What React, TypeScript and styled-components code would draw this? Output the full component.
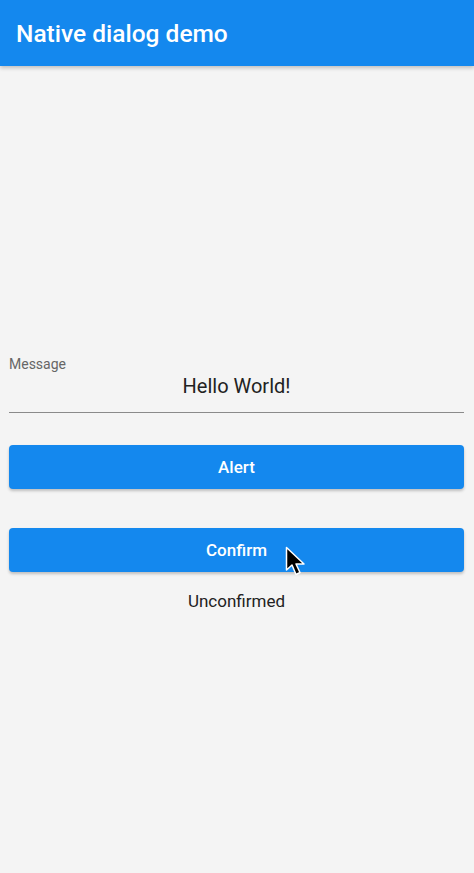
import styled, { createGlobalStyle } from "styled-components";

const GlobalStyle = createGlobalStyle`
  html, body {
    margin: 0;
    padding: 0;
    background: #f4f4f4;
    font-family: Roboto, "Liberation Sans", sans-serif;
  }
`;

const Page = styled.div`
  min-height: 873px;
  background: #f4f4f4;
  display: flex;
  flex-direction: column;
`;

const AppBar = styled.header`
  height: 66px;
  background: #1488ee;
  display: flex;
  align-items: center;
  padding: 0 16px;
  box-shadow: 0 2px 4px rgba(0, 0, 0, 0.22);
`;

const Title = styled.h1`
  margin: 0;
  font-size: 24.5px;
  font-weight: 500;
  color: #fff;
`;

const Body = styled.main`
  display: flex;
  flex-direction: column;
  padding: 290px 10px 0 9px;
`;

const Field = styled.label`
  display: flex;
  flex-direction: column;
  border-bottom: 1px solid #8a8a8a;
  padding-bottom: 14px;
`;

const FieldLabel = styled.span`
  font-size: 14px;
  color: #666;
  line-height: 16px;
`;

const FieldInput = styled.input`
  border: none;
  background: transparent;
  outline: none;
  text-align: center;
  font-family: inherit;
  font-size: 20px;
  color: #222;
  padding: 0;
  margin-top: 2px;
  height: 24px;
`;

const Button = styled.button<{ $gap: number }>`
  position: relative;
  margin-top: ${(p) => p.$gap}px;
  height: 44px;
  border: none;
  border-radius: 4px;
  background: #1488ee;
  color: #fff;
  font-family: inherit;
  font-size: 17px;
  font-weight: 500;
  box-shadow: 0 2px 3px rgba(0, 0, 0, 0.22);
`;

const Status = styled.p`
  margin: 19px 0 0;
  text-align: center;
  font-size: 17px;
  color: #222;
`;

const Cursor = styled.svg`
  position: absolute;
  left: 276px;
  top: 18px;
`;

export default function App() {
  return (
    <Page>
      <GlobalStyle />
      <AppBar>
        <Title>Native dialog demo</Title>
      </AppBar>
      <Body>
        <Field>
          <FieldLabel>Message</FieldLabel>
          <FieldInput defaultValue="Hello World!" />
        </Field>
        <Button $gap={32}>Alert</Button>
        <Button $gap={39}>
          Confirm
          <Cursor width="22" height="32" viewBox="0 0 22 32">
            <path
              d="M1.5 1.5 L1.5 24 L7 19 L11 28.5 L15 26.5 L11 18 L19 18 Z"
              fill="#000"
              stroke="#fff"
              strokeWidth="1.5"
              strokeLinejoin="round"
            />
          </Cursor>
        </Button>
        <Status>Unconfirmed</Status>
      </Body>
    </Page>
  );
}
